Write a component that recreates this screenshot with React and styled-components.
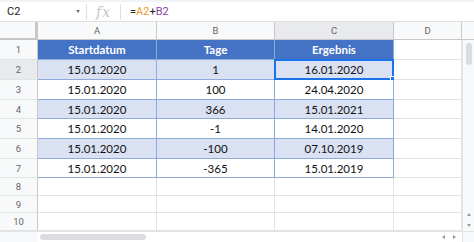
import React from 'react'
import styled, { createGlobalStyle } from 'styled-components'

const Global = createGlobalStyle`
  html, body { margin: 0; padding: 0; background: #fff; }
  body { width: 474px; height: 242px; overflow: hidden; }
`

const cols = ['A', 'B', 'C', 'D']
const rowHeights = [20, 20, 20, 19, 20, 20, 19, 18, 17, 18]

const data = [
  ['Startdatum', 'Tage', 'Ergebnis'],
  ['15.01.2020', '1', '16.01.2020'],
  ['15.01.2020', '100', '24.04.2020'],
  ['15.01.2020', '366', '15.01.2021'],
  ['15.01.2020', '-1', '14.01.2020'],
  ['15.01.2020', '-100', '07.10.2019'],
  ['15.01.2020', '-365', '15.01.2019'],
]

const Page = styled.div`
  width: 474px;
  height: 242px;
  display: flex;
  flex-direction: column;
  font-family: Roboto, "Liberation Sans", sans-serif;
  overflow: hidden;
`

const FormulaBar = styled.div`
  height: 22px;
  box-sizing: border-box;
  display: flex;
  align-items: center;
  border-top: 2px solid #f1f3f4;
  border-bottom: 1px solid #e0e0e0;
  background: #fff;
`

const NameBox = styled.div`
  width: 86px;
  box-sizing: border-box;
  padding: 0 6px 0 7px;
  display: flex;
  align-items: center;
  justify-content: space-between;
  font-size: 11px;
  color: #222;
`

const Caret = styled.span`
  width: 0;
  height: 0;
  border-left: 2.5px solid transparent;
  border-right: 2.5px solid transparent;
  border-top: 3px solid #777;
`

const Divider = styled.div`
  width: 1px;
  height: 16px;
  background: #e0e0e0;
`

const Fx = styled.div`
  width: 33px;
  text-align: center;
  font-family: "DejaVu Serif", "Liberation Serif", serif;
  font-style: italic;
  font-size: 14px;
  color: #c4c4c4;
  letter-spacing: 1px;
`

const Formula = styled.div`
  padding-left: 9px;
  font-size: 11px;
  color: #222;
`

const Ref = styled.span`
  color: ${p => p.$c};
`

const Sheet = styled.div`
  display: grid;
  grid-template-columns: 38px 119px 118px 119px 68px 12px;
  grid-template-rows: 18px ${rowHeights.map(h => h + 'px').join(' ')};
`

const Corner = styled.div`
  background: #f8f9fa;
  border-right: 3px solid #c7c7c7;
  border-bottom: 2px solid #c7c7c7;
  box-sizing: border-box;
`

const ColHead = styled.div`
  background: ${p => (p.$active ? '#e8eaed' : '#f8f9fa')};
  border-right: 1px solid #c7c7c7;
  border-bottom: 1px solid #c7c7c7;
  box-sizing: border-box;
  display: flex;
  align-items: center;
  justify-content: center;
  font-size: 9.5px;
  color: #666;
`

const HeadFiller = styled.div`
  background: #f8f9fa;
  border-bottom: 1px solid #c7c7c7;
`

const RowHead = styled.div`
  background: ${p => (p.$active ? '#e8eaed' : '#f8f9fa')};
  border-right: 1px solid #c7c7c7;
  border-bottom: 1px solid #e2e3e3;
  box-sizing: border-box;
  display: flex;
  align-items: center;
  justify-content: center;
  font-size: 9.5px;
  color: #666;
`

const Cell = styled.div`
  position: relative;
  box-sizing: border-box;
  display: flex;
  align-items: center;
  justify-content: center;
  font-family: Lato, "Open Sans", sans-serif;
  font-size: 11.5px;
  color: #111;
  border-right: 1px solid ${p => (p.$table ? '#8eaadb' : '#e2e3e3')};
  border-bottom: 1px solid ${p => (p.$table ? '#8eaadb' : '#e2e3e3')};
  background: ${p => (p.$head ? '#4472c4' : p.$band ? '#d9e1f2' : '#fff')};
  ${p => p.$head && 'color: #fff; font-weight: 700;'}
`

const Selection = styled.div`
  position: absolute;
  inset: -1px;
  border: 2px solid #1a73e8;
  box-sizing: border-box;
  pointer-events: none;
`

const Handle = styled.div`
  position: absolute;
  right: -4px;
  bottom: -4px;
  width: 6px;
  height: 6px;
  background: #1a73e8;
  border: 1px solid #fff;
  box-sizing: border-box;
`

const VScroll = styled.div`
  grid-column: 6;
  grid-row: 2 / -1;
  background: #f8f9fa;
  border-left: 1px solid #e2e3e3;
  display: flex;
  flex-direction: column;
  align-items: center;
  padding-top: 3px;
`

const VThumb = styled.div`
  width: 6px;
  height: 22px;
  border-radius: 3px;
  background: #dadce0;
`

const Arrows = styled.div`
  display: flex;
  flex-direction: ${p => (p.$row ? 'row' : 'column')};
  gap: 8px;
  align-items: center;
  ${p => (p.$row ? 'margin-left: auto;' : 'margin-top: auto; padding-bottom: 4px;')}
`

const Tri = styled.span`
  width: 0;
  height: 0;
  ${p => p.$dir === 'up' && 'border-left: 2.5px solid transparent; border-right: 2.5px solid transparent; border-bottom: 3px solid #999;'}
  ${p => p.$dir === 'down' && 'border-left: 2.5px solid transparent; border-right: 2.5px solid transparent; border-top: 3px solid #999;'}
  ${p => p.$dir === 'left' && 'border-top: 2.5px solid transparent; border-bottom: 2.5px solid transparent; border-right: 3px solid #999;'}
  ${p => p.$dir === 'right' && 'border-top: 2.5px solid transparent; border-bottom: 2.5px solid transparent; border-left: 3px solid #999;'}
`

const HScroll = styled.div`
  flex: 1;
  display: grid;
  grid-template-columns: 38px 1fr 12px;
  border-top: 1px solid #e2e3e3;
`

const HLeft = styled.div`
  background: #f8f9fa;
`

const HTrack = styled.div`
  display: flex;
  align-items: center;
  padding: 0 6px 0 2px;
`

const HThumb = styled.div`
  width: 106px;
  height: 6px;
  border-radius: 3px;
  background: #dadce0;
`

const HRight = styled.div`
  background: #f8f9fa;
  border-left: 1px solid #e2e3e3;
`

export default function App() {
  return (
    <Page>
      <Global />
      <FormulaBar>
        <NameBox>C2<Caret /></NameBox>
        <Divider />
        <Fx>fx</Fx>
        <Divider />
        <Formula>
          =<Ref $c="#f29a1d">A2</Ref>+<Ref $c="#8a46a6">B2</Ref>
        </Formula>
      </FormulaBar>
      <Sheet>
        <Corner />
        {cols.map(c => (
          <ColHead key={c} $active={c === 'C'}>{c}</ColHead>
        ))}
        <HeadFiller />
        {rowHeights.map((h, r) => (
          <React.Fragment key={r}>
            <RowHead $active={r === 1}>{r + 1}</RowHead>
            {[0, 1, 2].map(c => {
              const row = data[r]
              return (
                <Cell
                  key={c}
                  $table={!!row}
                  $head={r === 0}
                  $band={row && r % 2 === 1}
                >
                  {row ? row[c] : ''}
                  {r === 1 && c === 2 && (
                    <Selection>
                      <Handle />
                    </Selection>
                  )}
                </Cell>
              )
            })}
            <Cell />
          </React.Fragment>
        ))}
        <VScroll>
          <VThumb />
          <Arrows>
            <Tri $dir="up" />
            <Tri $dir="down" />
          </Arrows>
        </VScroll>
      </Sheet>
      <HScroll>
        <HLeft />
        <HTrack>
          <HThumb />
          <Arrows $row>
            <Tri $dir="left" />
            <Tri $dir="right" />
          </Arrows>
        </HTrack>
        <HRight />
      </HScroll>
    </Page>
  )
}
